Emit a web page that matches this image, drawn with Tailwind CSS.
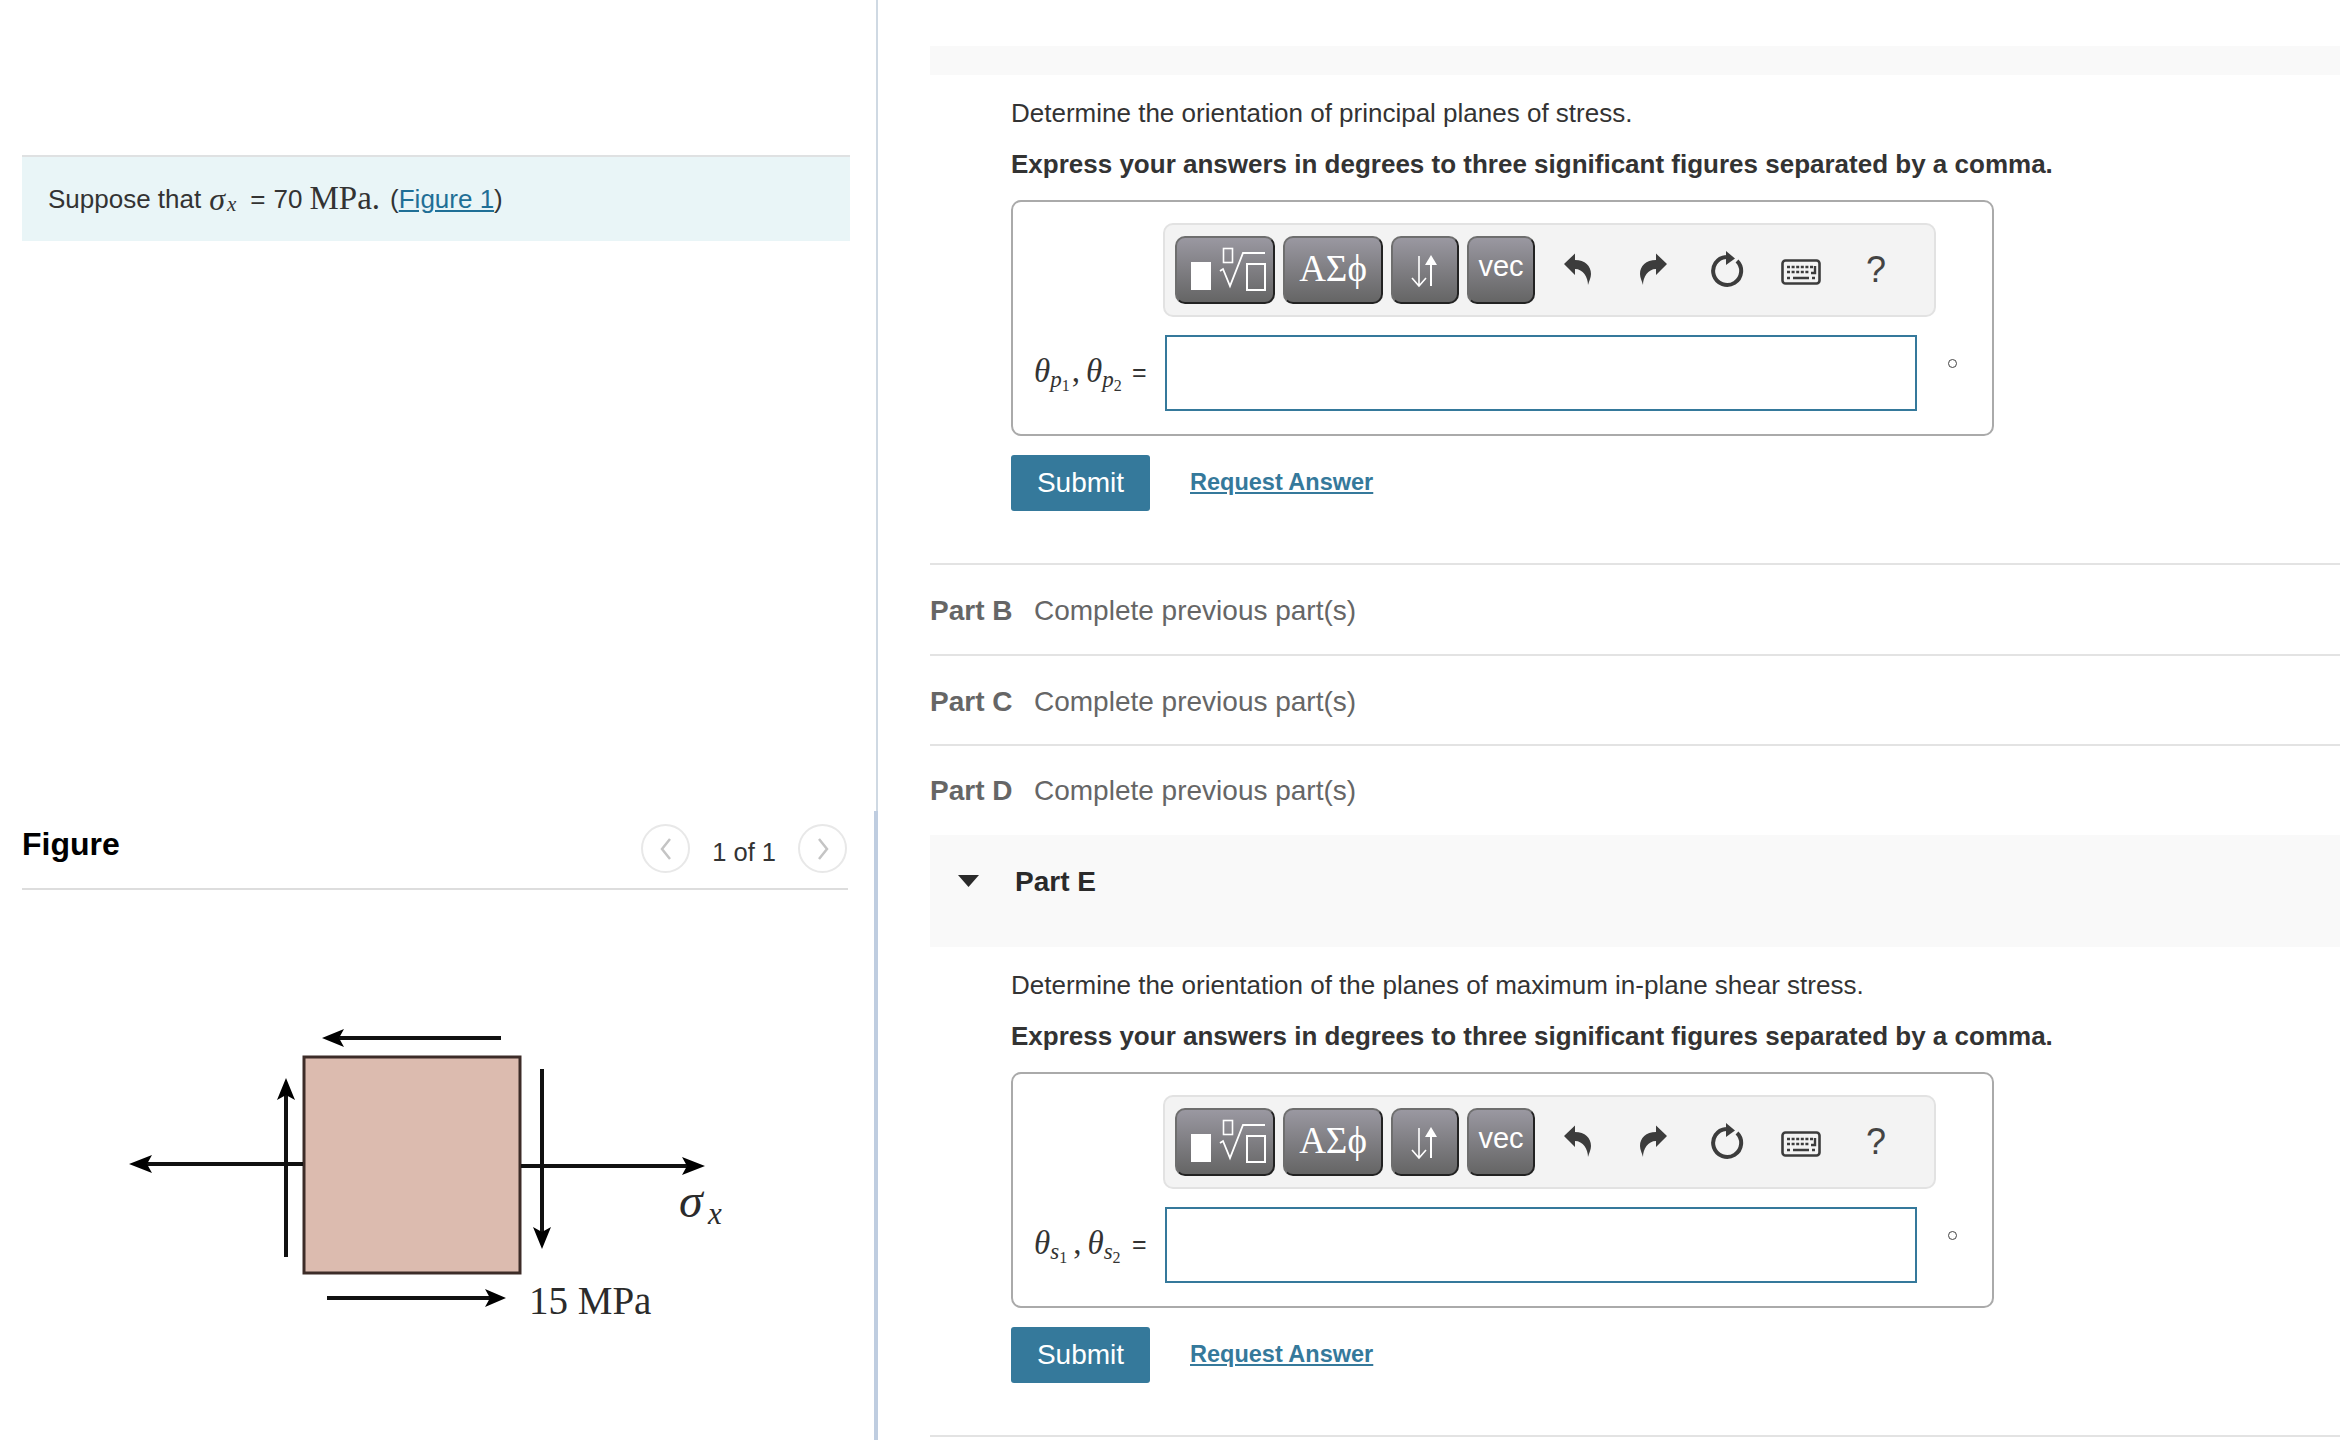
<!DOCTYPE html>
<html>
<head>
<meta charset="utf-8">
<script src="https://cdn.jsdelivr.net/npm/@tailwindcss/browser@4"></script>
</head>
<body class="bg-white">
<div class="flex w-[2340px] h-[1440px] overflow-hidden font-['Liberation_Sans',Arial,sans-serif] text-[#333]">
  <!-- left panel -->
  <div class="relative w-[880px] shrink-0 h-full pt-[155px]">
    <div class="absolute right-[2px] top-0 w-[2px] h-full bg-[#cfd9e3]"></div>
    <div class="absolute right-[2px] top-[811px] w-[4px] h-[629px] bg-[#bfcde0]"></div>
    <div class="ml-[22px] w-[828px] h-[86px] bg-[#e9f5f7] border-t-2 border-[#dfe1e2] pl-[26px] flex items-center text-[26px] whitespace-nowrap">
      <span>Suppose that</span>
      <span class="ml-[8px] font-['Liberation_Serif',serif] italic text-[32px]">σ</span>
      <span class="ml-[2px] relative top-[6px] font-['Liberation_Serif',serif] italic text-[21px]">x</span>
      <span class="ml-[14px]">=</span>
      <span class="ml-[8px]">70</span>
      <span class="ml-[7px] font-['Liberation_Serif',serif] text-[33px]">MPa.</span>
      <span class="ml-[10px]">(<a class="text-[#1f6f96] underline">Figure 1</a>)</span>
    </div>
    <div class="ml-[22px] w-[826px] mt-[583px] h-[66px] border-b-2 border-[#dddddd] flex justify-between pr-[1px]">
      <div class="text-[32px] font-bold text-black leading-[40px]">Figure</div>
      <div class="flex gap-[22px] items-start">
        <div class="w-[49px] h-[49px] rounded-full border-2 border-[#e8e8e8] flex items-center justify-center">
          <svg width="16" height="24" viewBox="0 0 16 24"><path d="M12 2 L4 12 L12 22" fill="none" stroke="#c4c4c4" stroke-width="2.5"/></svg>
        </div>
        <div class="text-[25.5px] leading-[56px]">1 of 1</div>
        <div class="w-[49px] h-[49px] rounded-full border-2 border-[#e8e8e8] flex items-center justify-center">
          <svg width="16" height="24" viewBox="0 0 16 24"><path d="M4 2 L12 12 L4 22" fill="none" stroke="#c4c4c4" stroke-width="2.5"/></svg>
        </div>
      </div>
    </div>
    <svg class="block" width="874" height="549" viewBox="0 891 874 549">
      <rect x="304" y="1058" width="216" height="216" fill="#dcbbaf" stroke="#3d2c28" stroke-width="3"/>
      <g stroke="#111" stroke-width="4" fill="none">
        <path d="M501 1039 H335"/>
        <path d="M286 1258 V1095"/>
        <path d="M542 1070 V1235"/>
        <path d="M303 1165 H145"/>
        <path d="M521 1167 H690"/>
        <path d="M327 1299 H490"/>
      </g>
      <g fill="#000">
        <path d="M322 1039 L344 1030 L339 1039 L344 1048 Z"/>
        <path d="M286 1079 L295 1101 L286 1096 L277 1101 Z"/>
        <path d="M542 1250 L533 1228 L542 1233 L551 1228 Z"/>
        <path d="M129 1165 L152 1156 L147 1165 L152 1174 Z"/>
        <path d="M705 1167 L682 1158 L687 1167 L682 1176 Z"/>
        <path d="M506 1299 L485 1290 L490 1299 L485 1308 Z"/>
      </g>
      <g font-family="Liberation Serif, serif" fill="#2b2b2b">
        <text x="679" y="1218" font-size="48" font-style="italic">σ</text>
        <text x="708" y="1225" font-size="31" font-style="italic">x</text>
        <text x="529" y="1315" font-size="39">15 MPa</text>
      </g>
    </svg>
  </div>

  <!-- right panel -->
  <div class="flex-1 min-w-0 pl-[50px] pt-[46px]">
    <div class="h-[29px] bg-[#f9f9f9]"></div>

    <div class="pl-[81px] pt-[25px] h-[488px]">
      <p class="h-[26px] text-[26px] leading-[26px]">Determine the orientation of principal planes of stress.</p>
      <p class="h-[26px] text-[26px] leading-[26px] mt-[25px] font-bold">Express your answers in degrees to three significant figures separated by a comma.</p>
      <div class="mt-[23px] w-[983px] h-[236px] border-2 border-[#aaaaaa] rounded-[10px] pl-[150px] pt-[21px]">
        <div class="w-[773px] h-[94px] bg-[#f3f3f3] border-2 border-[#e2e2e2] rounded-[10px] flex items-center pl-[10px] pb-[1px]">
          <div class="w-[100px] h-[68px] rounded-[10px] bg-linear-to-b from-[#9a98a1] to-[#656565] border-2 border-[#6e6e6e] border-r-[#222] border-b-[#222] relative">
            <svg class="absolute left-0 top-0" width="96" height="64" viewBox="0 0 96 64"><rect x="14" y="24" width="20" height="28" fill="#fff"/><rect x="46.5" y="10.5" width="9" height="14" fill="none" stroke="#fff" stroke-width="1.6"/><path d="M43 33 L46 31 L53 48 L66 15 H88" fill="none" stroke="#fff" stroke-width="1.8"/><rect x="70" y="26" width="18" height="26" fill="none" stroke="#fff" stroke-width="2"/></svg>
          </div>
          <div class="ml-[8px] w-[100px] h-[68px] rounded-[10px] bg-linear-to-b from-[#9a98a1] to-[#656565] border-2 border-[#6e6e6e] border-r-[#222] border-b-[#222] flex items-center justify-center text-white font-['Liberation_Serif',serif] text-[37px] leading-none pb-[2px]">ΑΣϕ</div>
          <div class="ml-[8px] w-[68px] h-[68px] rounded-[10px] bg-linear-to-b from-[#9a98a1] to-[#656565] border-2 border-[#6e6e6e] border-r-[#222] border-b-[#222] relative">
            <svg class="absolute left-0 top-0" width="64" height="64" viewBox="0 0 64 64"><path d="M26 18 V48 M19 40 L26 48 L33 40" fill="none" stroke="#fff" stroke-width="1.6"/><path d="M38 48 V20" fill="none" stroke="#fff" stroke-width="2"/><path d="M38 17 L44 27 H32 Z" fill="#fff"/></svg>
          </div>
          <div class="ml-[8px] w-[68px] h-[68px] rounded-[10px] bg-linear-to-b from-[#9a98a1] to-[#656565] border-2 border-[#6e6e6e] border-r-[#222] border-b-[#222] flex items-center justify-center text-white text-[29px] leading-none pb-[6px]">vec</div>
          <svg class="ml-[27px]" width="30" height="34" viewBox="0 0 30 34"><path d="M2 11 L13 0.5 V7 C23 7 29 13 29 21 C29 25 27 28 26 32 C26 24 21 16 13 16 V22 Z" fill="#3c3c3c"/></svg>
          <svg class="ml-[47px]" width="30" height="34" viewBox="0 0 30 34"><path d="M28 11 L17 0.5 V7 C7 7 1 13 1 21 C1 25 3 28 4 32 C4 24 9 16 17 16 V22 Z" fill="#3c3c3c"/></svg>
          <svg class="ml-[41px]" width="36" height="38" viewBox="0 0 36 38"><path d="M16 6 A14 14 0 1 0 27 10" fill="none" stroke="#3c3c3c" stroke-width="4"/><path d="M16 0 L25 7.5 L16 14 Z" fill="#3c3c3c"/></svg>
          <svg class="ml-[35px] mt-[5px]" width="40" height="26" viewBox="0 0 40 26"><rect x="1.5" y="1.5" width="37" height="23" rx="3" fill="none" stroke="#3c3c3c" stroke-width="2.6"/><path d="M6 8 H33 M6 13 H28" fill="none" stroke="#3c3c3c" stroke-width="2.4" stroke-dasharray="3 1.6"/><path d="M6 19 H9 M12 19 H28 M31 19 H34 M34 7 V14 H30" fill="none" stroke="#3c3c3c" stroke-width="2.4"/></svg>
          <div class="ml-[45px] text-[36px] leading-none text-[#444]">?</div>
        </div>
        <div class="relative h-[76px] mt-[18px] -ml-[148px]">
          <div class="absolute left-[19px] top-[16px] text-[33px] leading-[40px] italic font-['Liberation_Serif',serif] whitespace-nowrap">θ<span class="relative top-[5px] text-[23px]">p</span><span class="relative top-[9px] not-italic text-[16px]">1</span><span class="not-italic ml-[2px]">,</span><span class="ml-[6px]">θ</span><span class="relative top-[5px] text-[23px]">p</span><span class="relative top-[9px] not-italic text-[16px]">2</span></div>
          <div class="absolute left-[117px] top-[17px] text-[25px] leading-[40px]">=</div>
          <div class="absolute left-[150px] top-0 w-[752px] h-[76px] border-2 border-[#35799b] bg-white"></div>
          <div class="absolute left-[933px] top-[24px] w-[9px] h-[9px] rounded-full border-[1.5px] border-[#444]"></div>
        </div>
      </div>
      <div class="mt-[19px] flex items-center">
        <div class="w-[139px] h-[56px] rounded-[3px] bg-[#35799b] text-white text-[28px] flex items-center justify-center">Submit</div>
        <a class="ml-[40px] text-[23.5px] font-bold text-[#35799b] underline">Request Answer</a>
      </div>
    </div>

    <div class="border-t-2 border-[#e3e3e3] h-[91px] pt-[3px] flex items-center text-[28px] text-[#666]"><span class="font-bold w-[104px]">Part B</span><span>Complete previous part(s)</span></div>
    <div class="border-t-2 border-[#e3e3e3] h-[90px] pt-[3px] flex items-center text-[28px] text-[#666]"><span class="font-bold w-[104px]">Part C</span><span>Complete previous part(s)</span></div>
    <div class="border-t-2 border-[#e3e3e3] h-[91px] pt-[1px] flex items-center text-[28px] text-[#666]"><span class="font-bold w-[104px]">Part D</span><span>Complete previous part(s)</span></div>

    <div class="h-[112px] bg-[#f9f9f9] flex items-start pt-[30px]">
      <svg class="ml-[28px] mt-[10px]" width="21" height="12" viewBox="0 0 21 12"><path d="M0 0 H21 L10.5 12 Z" fill="#2a2a2a"/></svg>
      <span class="ml-[36px] text-[28px] font-bold leading-[34px] text-[#2a2a2a]">Part E</span>
    </div>

    <div class="pl-[81px] pt-[25px] h-[488px]">
      <p class="h-[26px] text-[26px] leading-[26px]">Determine the orientation of the planes of maximum in-plane shear stress.</p>
      <p class="h-[26px] text-[26px] leading-[26px] mt-[25px] font-bold">Express your answers in degrees to three significant figures separated by a comma.</p>
      <div class="mt-[23px] w-[983px] h-[236px] border-2 border-[#aaaaaa] rounded-[10px] pl-[150px] pt-[21px]">
        <div class="w-[773px] h-[94px] bg-[#f3f3f3] border-2 border-[#e2e2e2] rounded-[10px] flex items-center pl-[10px] pb-[1px]">
          <div class="w-[100px] h-[68px] rounded-[10px] bg-linear-to-b from-[#9a98a1] to-[#656565] border-2 border-[#6e6e6e] border-r-[#222] border-b-[#222] relative">
            <svg class="absolute left-0 top-0" width="96" height="64" viewBox="0 0 96 64"><rect x="14" y="24" width="20" height="28" fill="#fff"/><rect x="46.5" y="10.5" width="9" height="14" fill="none" stroke="#fff" stroke-width="1.6"/><path d="M43 33 L46 31 L53 48 L66 15 H88" fill="none" stroke="#fff" stroke-width="1.8"/><rect x="70" y="26" width="18" height="26" fill="none" stroke="#fff" stroke-width="2"/></svg>
          </div>
          <div class="ml-[8px] w-[100px] h-[68px] rounded-[10px] bg-linear-to-b from-[#9a98a1] to-[#656565] border-2 border-[#6e6e6e] border-r-[#222] border-b-[#222] flex items-center justify-center text-white font-['Liberation_Serif',serif] text-[37px] leading-none pb-[2px]">ΑΣϕ</div>
          <div class="ml-[8px] w-[68px] h-[68px] rounded-[10px] bg-linear-to-b from-[#9a98a1] to-[#656565] border-2 border-[#6e6e6e] border-r-[#222] border-b-[#222] relative">
            <svg class="absolute left-0 top-0" width="64" height="64" viewBox="0 0 64 64"><path d="M26 18 V48 M19 40 L26 48 L33 40" fill="none" stroke="#fff" stroke-width="1.6"/><path d="M38 48 V20" fill="none" stroke="#fff" stroke-width="2"/><path d="M38 17 L44 27 H32 Z" fill="#fff"/></svg>
          </div>
          <div class="ml-[8px] w-[68px] h-[68px] rounded-[10px] bg-linear-to-b from-[#9a98a1] to-[#656565] border-2 border-[#6e6e6e] border-r-[#222] border-b-[#222] flex items-center justify-center text-white text-[29px] leading-none pb-[6px]">vec</div>
          <svg class="ml-[27px]" width="30" height="34" viewBox="0 0 30 34"><path d="M2 11 L13 0.5 V7 C23 7 29 13 29 21 C29 25 27 28 26 32 C26 24 21 16 13 16 V22 Z" fill="#3c3c3c"/></svg>
          <svg class="ml-[47px]" width="30" height="34" viewBox="0 0 30 34"><path d="M28 11 L17 0.5 V7 C7 7 1 13 1 21 C1 25 3 28 4 32 C4 24 9 16 17 16 V22 Z" fill="#3c3c3c"/></svg>
          <svg class="ml-[41px]" width="36" height="38" viewBox="0 0 36 38"><path d="M16 6 A14 14 0 1 0 27 10" fill="none" stroke="#3c3c3c" stroke-width="4"/><path d="M16 0 L25 7.5 L16 14 Z" fill="#3c3c3c"/></svg>
          <svg class="ml-[35px] mt-[5px]" width="40" height="26" viewBox="0 0 40 26"><rect x="1.5" y="1.5" width="37" height="23" rx="3" fill="none" stroke="#3c3c3c" stroke-width="2.6"/><path d="M6 8 H33 M6 13 H28" fill="none" stroke="#3c3c3c" stroke-width="2.4" stroke-dasharray="3 1.6"/><path d="M6 19 H9 M12 19 H28 M31 19 H34 M34 7 V14 H30" fill="none" stroke="#3c3c3c" stroke-width="2.4"/></svg>
          <div class="ml-[45px] text-[36px] leading-none text-[#444]">?</div>
        </div>
        <div class="relative h-[76px] mt-[18px] -ml-[148px]">
          <div class="absolute left-[19px] top-[16px] text-[33px] leading-[40px] italic font-['Liberation_Serif',serif] whitespace-nowrap">θ<span class="relative top-[5px] text-[23px]">s</span><span class="relative top-[9px] not-italic text-[16px]">1</span><span class="not-italic ml-[6px]">,</span><span class="ml-[6px]">θ</span><span class="relative top-[5px] text-[23px]">s</span><span class="relative top-[9px] not-italic text-[16px]">2</span></div>
          <div class="absolute left-[117px] top-[17px] text-[25px] leading-[40px]">=</div>
          <div class="absolute left-[150px] top-0 w-[752px] h-[76px] border-2 border-[#35799b] bg-white"></div>
          <div class="absolute left-[933px] top-[24px] w-[9px] h-[9px] rounded-full border-[1.5px] border-[#444]"></div>
        </div>
      </div>
      <div class="mt-[19px] flex items-center">
        <div class="w-[139px] h-[56px] rounded-[3px] bg-[#35799b] text-white text-[28px] flex items-center justify-center">Submit</div>
        <a class="ml-[40px] text-[23.5px] font-bold text-[#35799b] underline">Request Answer</a>
      </div>
    </div>
    <div class="border-t-2 border-[#e3e3e3] h-[5px]"></div>
  </div>
</div>
</body>
</html>
